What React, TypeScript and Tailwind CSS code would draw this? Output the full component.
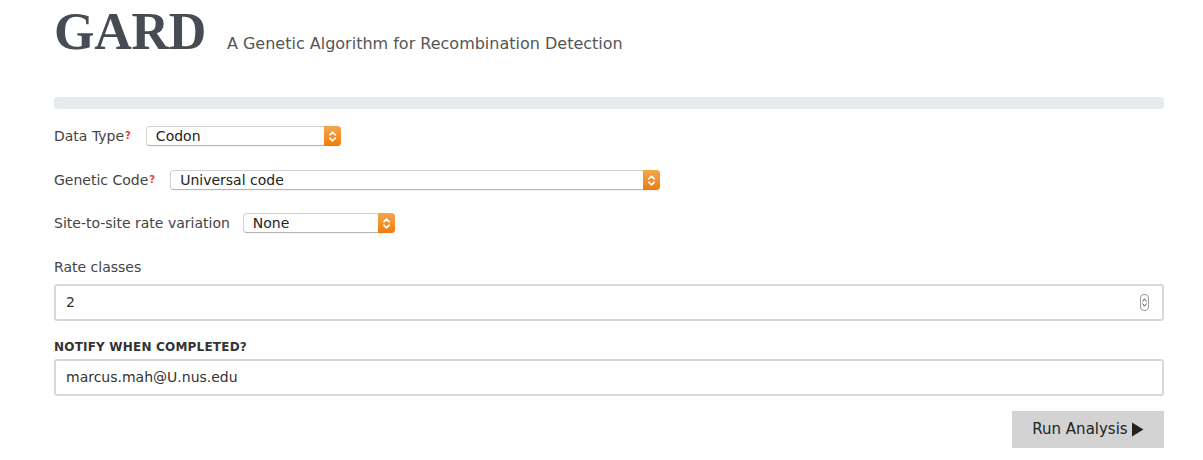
import React from "react";

const Q = () => (
  <sup className="text-[10px] font-bold text-[#e4412b] ml-[1px] relative top-[-2px]">?</sup>
);

const Select = ({ value, width }: { value: string; width: string }) => (
  <div
    className={`flex h-[20px] items-stretch rounded-[4px] bg-white border border-[#d0d0d0] border-b-[#b5b5b5] shadow-[0_1px_0_rgba(0,0,0,0.04)] ${width}`}
  >
    <div className="flex-1 flex items-center pl-[9px] text-[14px] text-[#222]">{value}</div>
    <div className="w-[17px] -my-px -mr-px rounded-r-[4px] bg-gradient-to-b from-[#f4a74a] to-[#ef7b00] flex items-center justify-center">
      <svg width="9" height="13" viewBox="0 0 9 13" fill="none" stroke="white" strokeWidth="1.6" strokeLinecap="round" strokeLinejoin="round">
        <path d="M1.8 4.8 L4.5 2.2 L7.2 4.8" />
        <path d="M1.8 8.2 L4.5 10.8 L7.2 8.2" />
      </svg>
    </div>
  </div>
);

export default function App() {
  return (
    <div className="bg-white w-[1203px] h-[460px] overflow-hidden font-['DejaVu_Sans',sans-serif] text-[#444]">
      <div className="ml-[54px] w-[1110px]">
        <div className="flex items-baseline h-[62px] pt-[2px]">
          <span className="font-['Liberation_Serif',serif] font-bold text-[52px] leading-[60px] text-[#474b53] tracking-[-0.3px]">
            GARD
          </span>
          <span className="ml-[21px] text-[16px] text-[#555] tracking-[0px]">
            A Genetic Algorithm for Recombination Detection
          </span>
        </div>
        <div className="mt-[35px] h-[12px] rounded-[3px] bg-[#e8ebee]" />

        <div className="mt-[17px] flex items-center h-[20px]">
          <span className="text-[14px] text-[#444]">
            Data Type
            <Q />
          </span>
          <div className="ml-[15px]">
            <Select value="Codon" width="w-[195px]" />
          </div>
        </div>

        <div className="mt-[24px] flex items-center h-[20px]">
          <span className="text-[14px] text-[#444]">
            Genetic Code
            <Q />
          </span>
          <div className="ml-[15px]">
            <Select value="Universal code" width="w-[490px]" />
          </div>
        </div>

        <div className="mt-[23px] flex items-center h-[20px]">
          <span className="text-[14px] text-[#444]">Site-to-site rate variation</span>
          <div className="ml-[13px]">
            <Select value="None" width="w-[152px]" />
          </div>
        </div>

        <div className="mt-[25px] h-[18px] flex items-center text-[14px] text-[#444]">Rate classes</div>
        <div className="mt-[8px] h-[37px] rounded-[3px] border-2 border-[#d6d9dd] flex items-center pl-[10px] pr-[13px]">
          <span className="flex-1 text-[14px] text-[#333]">2</span>
          <div className="w-[9px] h-[17px] rounded-[4px] border border-[#9a9a9a] flex flex-col items-center justify-center gap-[1px]">
            <svg width="5" height="4" viewBox="0 0 5 4"><path d="M0.5 3.5 L2.5 0.8 L4.5 3.5" fill="none" stroke="#555" strokeWidth="1" /></svg>
            <svg width="5" height="4" viewBox="0 0 5 4"><path d="M0.5 0.5 L2.5 3.2 L4.5 0.5" fill="none" stroke="#555" strokeWidth="1" /></svg>
          </div>
        </div>

        <div className="mt-[19px] h-[14px] flex items-center text-[12px] font-bold text-[#333] uppercase tracking-[0.2px]">
          Notify when completed?
        </div>
        <div className="mt-[5px] h-[37px] rounded-[3px] border-2 border-[#d6d9dd] flex items-center pl-[10px]">
          <span className="text-[14px] text-[#333]">marcus.mah@U.nus.edu</span>
        </div>

        <div className="mt-[15px] flex justify-end">
          <button className="w-[152px] h-[37px] bg-[#d3d3d3] flex items-center justify-center gap-[3px] text-[15px] text-[#222]">
            Run Analysis
            <svg width="13" height="15" viewBox="0 0 13 15"><path d="M1 0.5 L12.5 7.5 L1 14.5 Z" fill="#222" /></svg>
          </button>
        </div>
      </div>
    </div>
  );
}
